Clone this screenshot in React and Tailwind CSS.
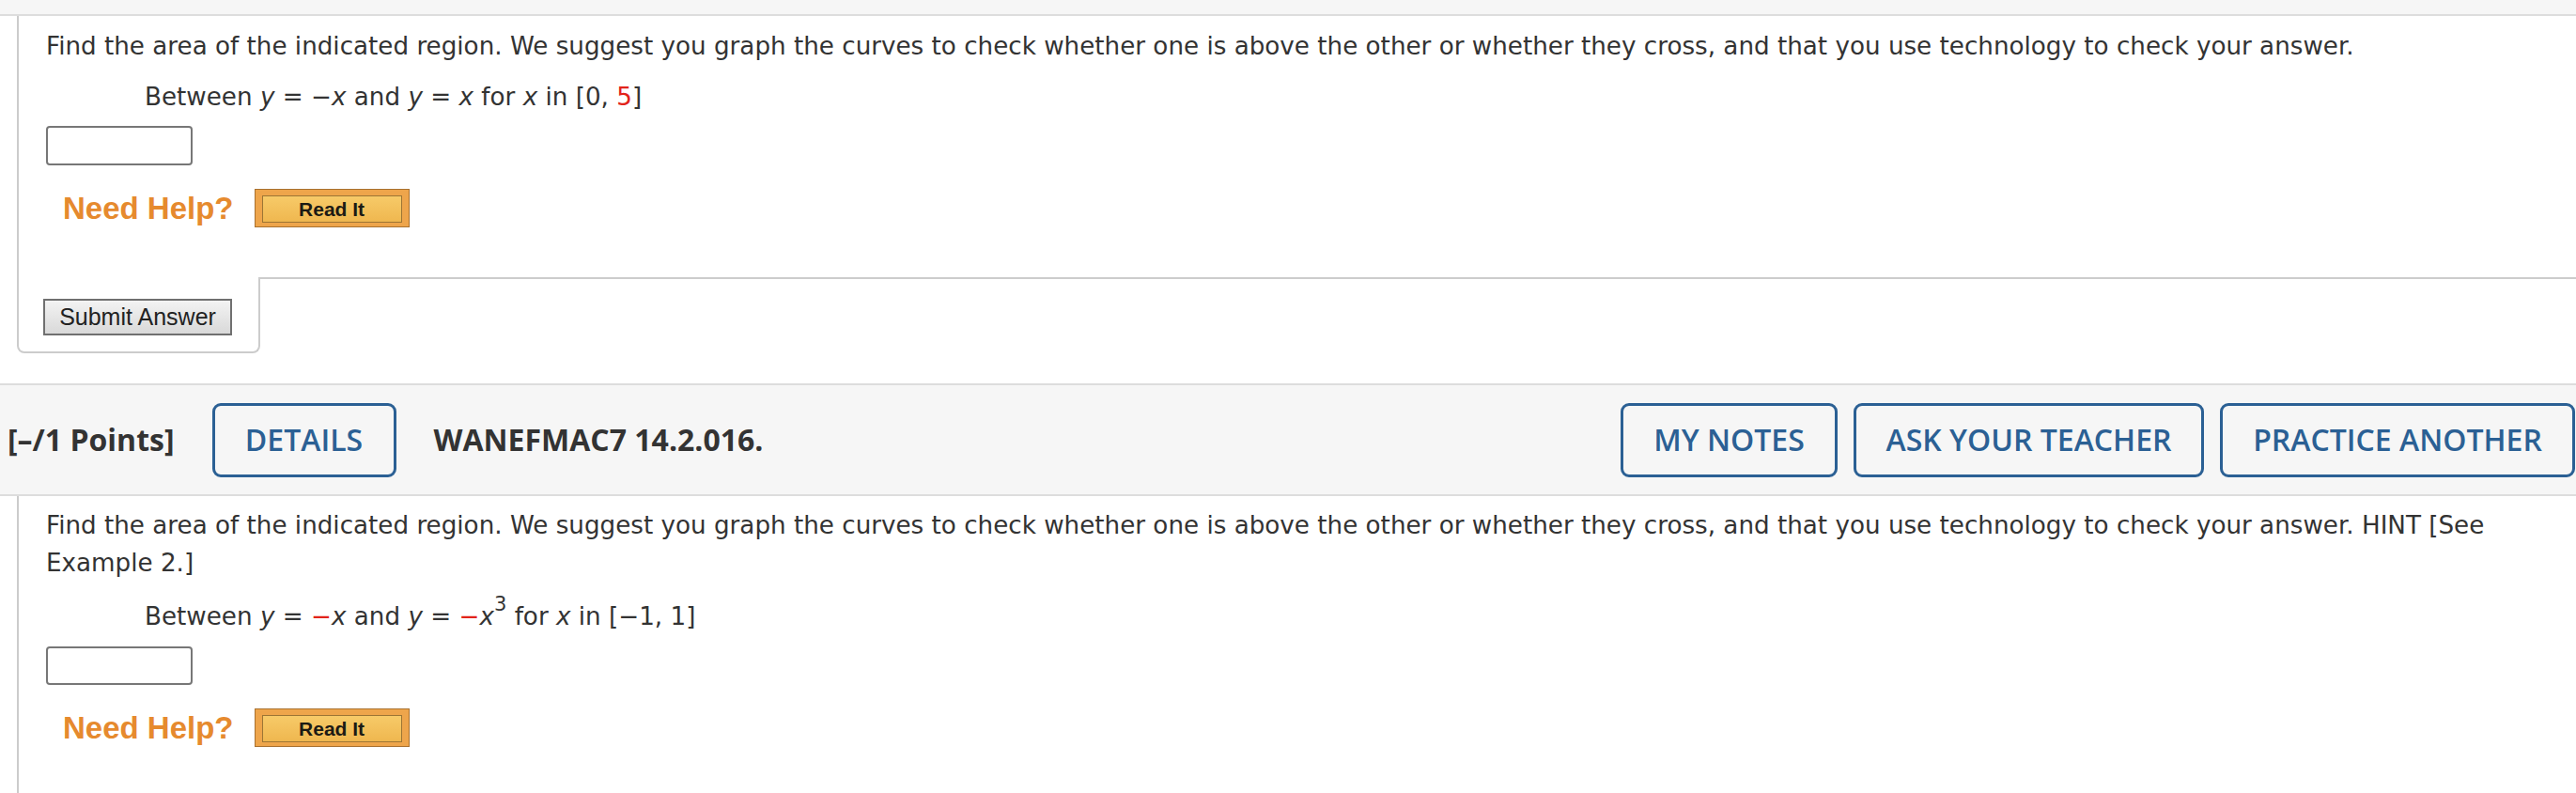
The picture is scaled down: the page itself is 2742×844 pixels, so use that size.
import React from "react";

const BODY = "font-['DejaVu_Sans',Verdana,sans-serif]";
const ARIAL = "font-['Liberation_Sans',Arial,sans-serif]";
const OPEN = "font-['Open_Sans',sans-serif]";

function ReadIt() {
  return (
    <div className="w-[165px] h-[41px] bg-[#eea54b] border border-[#a9712f] pt-[6px] pb-[4px] px-[7px] flex">
      <div className={`flex-1 border border-[#9c7535] bg-gradient-to-b from-[#f7ca68] to-[#efb74f] flex items-center justify-center ${ARIAL} font-bold text-[21px] text-[#1c1a14]`}>
        Read It
      </div>
    </div>
  );
}

function NeedHelp() {
  return (
    <div className="mt-[25px] flex items-center h-[41px]">
      <span className={`ml-[18px] ${ARIAL} font-bold text-[33px] leading-none text-[#e68a2e]`}>Need Help?</span>
      <div className="ml-[22px]">
        <ReadIt />
      </div>
    </div>
  );
}

function AnswerBox({ className = "" }) {
  return <div className={`w-[156px] border-2 border-[#777] rounded-[4px] bg-white ${className}`} />;
}

function OutlineBtn({ w, children }) {
  return (
    <button className={`${w} h-[79px] border-[3px] border-[#2b6094] rounded-[9px] flex items-center justify-center text-[32px] font-semibold text-[#2b6094] bg-transparent`}>
      {children}
    </button>
  );
}

const Red = ({ children }) => <span className="text-[#e2231a]">{children}</span>;
const V = ({ children }) => <i>{children}</i>;

export default function App() {
  return (
    <div className={`w-full min-h-[844px] bg-white text-[#333] ${BODY}`}>
      {/* tail of previous question header */}
      <div className="h-[17px] bg-[#f6f6f6] border-b-2 border-[#ddd]" />

      {/* question 1 */}
      <div className="ml-[18px]">
        <div className="border-l-2 border-[#ccc] pl-[29px] pt-[12px] pb-[53px] pr-[20px]">
          <p className="text-[26.2px] leading-[40px]">
            Find the area of the indicated region. We suggest you graph the curves to check whether one is above the other or whether they cross, and that you use technology to check your answer.
          </p>
          <div className="mt-[14px] ml-[105px] text-[26.2px] leading-[40px] h-[40px]">
            Between <V>y</V> = −<V>x</V> and <V>y</V> = <V>x</V> for <V>x</V> in [0, <Red>5</Red>]
          </div>
          <AnswerBox className="mt-[11px] h-[42px]" />
          <NeedHelp />
        </div>
        <div className="flex">
          <div className="w-[259px] border-l-2 border-r-2 border-b-2 border-[#ccc] rounded-b-[8px] pl-[26px] pt-[23px] pb-[17px]">
            <button className={`w-[201px] h-[39px] border-2 border-[#707070] bg-gradient-to-b from-[#f3f3f3] to-[#d9d9d9] ${ARIAL} text-[25px] text-[#222] flex items-center justify-center`}>
              Submit Answer
            </button>
          </div>
          <div className="flex-1 border-t-2 border-[#ccc]" />
        </div>
      </div>

      {/* question 2 header */}
      <div className={`mt-[32px] h-[120px] bg-[#f6f6f6] border-y-2 border-[#ddd] flex items-center pl-[8px] pr-[1px] ${OPEN}`}>
        <span className="text-[32px] font-bold text-[#333]">[–/1 Points]</span>
        <div className="ml-[40px]">
          <OutlineBtn w="w-[196px]">DETAILS</OutlineBtn>
        </div>
        <span className="ml-[40px] text-[32px] font-bold text-[#333]">WANEFMAC7 14.2.016.</span>
        <div className="ml-auto flex gap-[17px]">
          <OutlineBtn w="w-[231px]">MY NOTES</OutlineBtn>
          <OutlineBtn w="w-[373px]">ASK YOUR TEACHER</OutlineBtn>
          <OutlineBtn w="w-[378px]">PRACTICE ANOTHER</OutlineBtn>
        </div>
      </div>

      {/* question 2 */}
      <div className="ml-[18px] border-l-2 border-[#ccc] pl-[29px] pt-[11px] pb-[80px] pr-[40px]">
        <p className="text-[26.2px] leading-[40px]">
          Find the area of the indicated region. We suggest you graph the curves to check whether one is above the other or whether they cross, and that you use technology to check your answer. HINT [See Example 2.]
        </p>
        <div className="mt-[17px] ml-[105px] text-[26.2px] leading-[40px] h-[40px]">
          Between <V>y</V> = <Red>−</Red><V>x</V> and <V>y</V> = <Red>−</Red><V>x</V>
          <span className="relative -top-[15px] text-[21px] leading-none">3</span> for <V>x</V> in [−1, 1]
        </div>
        <AnswerBox className="mt-[12px] h-[41px]" />
        <NeedHelp />
      </div>
    </div>
  );
}
